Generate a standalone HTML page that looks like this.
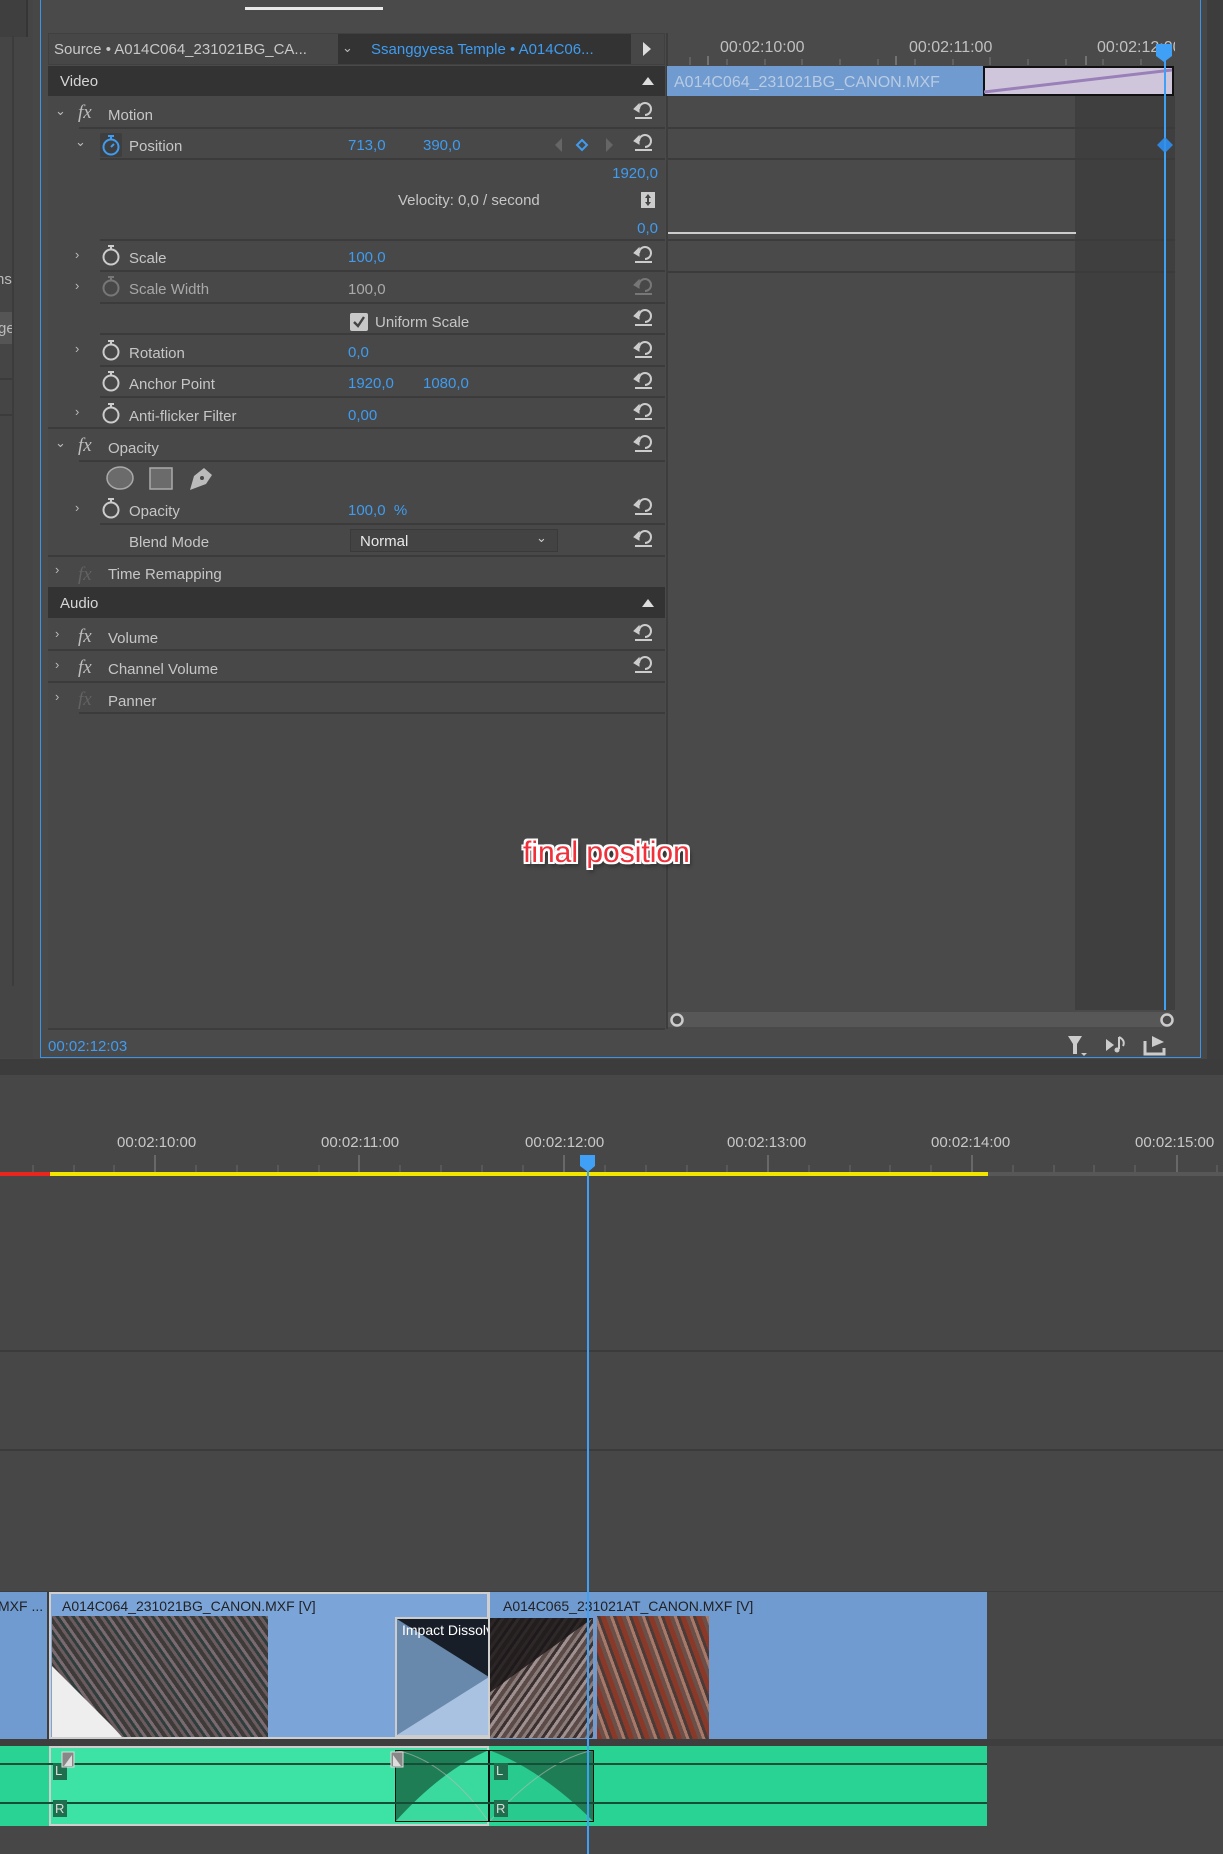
<!DOCTYPE html>
<html><head><meta charset="utf-8">
<style>
*{margin:0;padding:0;box-sizing:border-box}
body{width:1223px;height:1854px;background:#474747;position:relative;overflow:hidden;font-family:"Liberation Sans",sans-serif;font-size:15px;color:#c6c6c6}
.a{position:absolute}
.t{position:absolute;white-space:nowrap;line-height:18px}
.b{color:#3f9cf0}
.hl{position:absolute;height:2px;background:#3b3b3b}
.ico{position:absolute}
.fx{position:absolute;font-family:"Liberation Serif",serif;font-style:italic;font-size:19px;color:#bdbdbd;line-height:18px}
.chev{position:absolute;font-size:13px;color:#bbb;line-height:14px}
</style></head><body>

<!-- left strip -->
<div class="a" style="left:0;top:0;width:33px;height:1058px;background:#454545"></div>
<div class="a" style="left:0;top:0;width:27px;height:37px;background:#3f3f3f"></div>
<div class="a" style="left:26px;top:0;width:2px;height:37px;background:#353535"></div>
<div class="a" style="left:0;top:312px;width:14px;height:32px;background:#555"></div>
<div class="t" style="left:-4px;top:271px;color:#bbb">ns</div>
<div class="t" style="left:-2px;top:320px;color:#bbb">ge</div>
<div class="a" style="left:0;top:378px;width:14px;height:2px;background:#3b3b3b"></div>
<div class="a" style="left:0;top:414px;width:14px;height:2px;background:#3b3b3b"></div>
<div class="a" style="left:12px;top:36px;width:2px;height:950px;background:#3c3c3c"></div>

<!-- effect controls panel -->
<div class="a" style="left:40px;top:-2px;width:1161px;height:1060px;border:1px solid #3a94e8;background:#4a4a4a"></div>
<div class="a" style="left:245px;top:7px;width:138px;height:3px;background:#e8e8e8"></div>

<!-- header tabs -->
<div class="a" style="left:48px;top:33px;width:617px;height:32px;background:#474747;border:1px solid #404040"></div>
<div class="t" style="left:54px;top:41px;color:#c8c8c8">Source • A014C064_231021BG_CA...</div>
<div class="a" style="left:338px;top:34px;width:293px;height:30px;background:#333"></div>
<div class="t" style="left:342px;top:39px;color:#bbb;font-size:13px">&#8964;</div>
<div class="t b" style="left:371px;top:41px">Ssanggyesa Temple • A014C06...</div>
<svg class="ico" style="left:643px;top:42px" width="8" height="14"><path d="M0 0L8 7L0 14Z" fill="#ddd"/></svg>

<!-- left pane body -->
<div class="a" style="left:48px;top:66px;width:617px;height:963px;background:#484848"></div>
<div class="a" style="left:48px;top:66px;width:617px;height:30px;background:#333"></div>
<div class="t" style="left:60px;top:73px;color:#d6d6d6">Video</div>
<svg class="ico" style="left:642px;top:77px" width="12" height="8"><path d="M0 8L6 0L12 8Z" fill="#ddd"/></svg>
<div class="a" style="left:48px;top:587px;width:617px;height:31px;background:#333"></div>
<div class="t" style="left:60px;top:595px;color:#d6d6d6">Audio</div>
<svg class="ico" style="left:642px;top:599px" width="12" height="8"><path d="M0 8L6 0L12 8Z" fill="#ddd"/></svg>

<!-- row separators -->
<div class="hl" style="left:79px;top:127px;width:586px"></div>
<div class="hl" style="left:100px;top:158px;width:565px"></div>
<div class="hl" style="left:100px;top:239px;width:565px"></div>
<div class="hl" style="left:100px;top:270px;width:565px"></div>
<div class="hl" style="left:100px;top:302px;width:565px"></div>
<div class="hl" style="left:100px;top:333px;width:565px"></div>
<div class="hl" style="left:100px;top:365px;width:565px"></div>
<div class="hl" style="left:100px;top:396px;width:565px"></div>
<div class="hl" style="left:48px;top:427px;width:617px"></div>
<div class="hl" style="left:79px;top:460px;width:586px"></div>
<div class="hl" style="left:100px;top:523px;width:565px"></div>
<div class="hl" style="left:48px;top:555px;width:617px"></div>
<div class="hl" style="left:48px;top:649px;width:617px"></div>
<div class="hl" style="left:48px;top:681px;width:617px"></div>
<div class="hl" style="left:79px;top:712px;width:586px"></div>

<!-- effect rows -->
<div class="chev" style="left:55px;top:104px">&#8964;</div><div class="fx" style="left:78px;top:104px">fx</div><div class="t" style="left:108px;top:107px">Motion</div>
<div class="chev" style="left:75px;top:135px">&#8964;</div>
<div class="t" style="left:129px;top:138px">Position</div><div class="t b" style="left:348px;top:137px">713,0</div><div class="t b" style="left:423px;top:137px">390,0</div>
<svg class="ico" style="left:554px;top:137px" width="60" height="16"><path d="M8 1L1 8L8 15Z" fill="#666"/><path d="M28 3L33 8L28 13L23 8Z" fill="none" stroke="#3f9cf0" stroke-width="2"/><path d="M52 1L59 8L52 15Z" fill="#666"/></svg>
<div class="t b" style="right:565px;top:165px">1920,0</div>
<div class="t" style="left:398px;top:192px">Velocity: 0,0 / second</div>
<div class="a" style="left:641px;top:192px;width:14px;height:16px;background:#ccc"></div>
<svg class="ico" style="left:641px;top:192px" width="14" height="16"><path d="M7 2L10 6H4ZM7 14L10 10H4Z M6 6H8V10H6Z" fill="#444"/></svg>
<div class="t b" style="right:565px;top:220px">0,0</div>
<div class="chev" style="left:75px;top:248px">&#8250;</div><div class="t" style="left:129px;top:250px">Scale</div><div class="t b" style="left:348px;top:249px">100,0</div>
<div class="chev" style="left:75px;top:279px">&#8250;</div><div class="t" style="left:129px;top:281px;color:#a8a8a8">Scale Width</div><div class="t" style="left:348px;top:281px;color:#aaa">100,0</div>
<div class="a" style="left:350px;top:313px;width:18px;height:18px;background:#c8c8c8;border-radius:2px"></div>
<svg class="ico" style="left:352px;top:315px" width="14" height="14"><path d="M2 7L6 11L12 2" fill="none" stroke="#444" stroke-width="2.4"/></svg>
<div class="t" style="left:375px;top:314px">Uniform Scale</div>
<div class="chev" style="left:75px;top:342px">&#8250;</div><div class="t" style="left:129px;top:345px">Rotation</div><div class="t b" style="left:348px;top:344px">0,0</div>
<div class="t" style="left:129px;top:376px">Anchor Point</div><div class="t b" style="left:348px;top:375px">1920,0</div><div class="t b" style="left:423px;top:375px">1080,0</div>
<div class="chev" style="left:75px;top:405px">&#8250;</div><div class="t" style="left:129px;top:408px">Anti-flicker Filter</div><div class="t b" style="left:348px;top:407px">0,00</div>
<div class="chev" style="left:55px;top:436px">&#8964;</div><div class="fx" style="left:78px;top:437px">fx</div><div class="t" style="left:108px;top:440px">Opacity</div>
<svg class="ico" style="left:106px;top:466px" width="110" height="26"><ellipse cx="14" cy="12" rx="13" ry="11" fill="#6b6b6b" stroke="#aaa" stroke-width="1.5"/><rect x="44" y="2" width="22" height="21" fill="#6b6b6b" stroke="#aaa" stroke-width="1.5"/><path d="M84 24L88 10L98 2L106 9L100 18Z" fill="#bbb"/><circle cx="96" cy="12" r="2" fill="#484848"/></svg>
<div class="chev" style="left:75px;top:501px">&#8250;</div><div class="t" style="left:129px;top:503px">Opacity</div><div class="t b" style="left:348px;top:502px">100,0&nbsp; %</div>
<div class="t" style="left:129px;top:534px">Blend Mode</div>
<div class="a" style="left:350px;top:529px;width:208px;height:23px;background:#434343;border:1px solid #3a3a3a"></div>
<div class="t" style="left:360px;top:533px;color:#e8e8e8">Normal</div>
<div class="t" style="left:536px;top:529px;font-size:13px;color:#ccc">&#8964;</div>
<div class="chev" style="left:55px;top:563px">&#8250;</div><div class="fx" style="left:78px;top:566px;color:#626262">fx</div><div class="t" style="left:108px;top:566px">Time Remapping</div>
<div class="chev" style="left:55px;top:627px">&#8250;</div><div class="fx" style="left:78px;top:628px">fx</div><div class="t" style="left:108px;top:630px">Volume</div>
<div class="chev" style="left:55px;top:658px">&#8250;</div><div class="fx" style="left:78px;top:659px">fx</div><div class="t" style="left:108px;top:661px">Channel Volume</div>
<div class="chev" style="left:55px;top:690px">&#8250;</div><div class="fx" style="left:78px;top:691px;color:#626262">fx</div><div class="t" style="left:108px;top:693px">Panner</div>

<!-- stopwatches -->
<svg class="ico" style="left:100px;top:133px" width="22" height="24"><rect x="0" y="0" width="22" height="24" fill="#3e3e3e" rx="2"/><circle cx="11" cy="14" r="7.5" fill="none" stroke="#3f9cf0" stroke-width="2"/><path d="M8 3H14M11 3V6M11 14L14 11" stroke="#3f9cf0" stroke-width="2"/></svg>
<svg class="ico" style="left:101px;top:243px" width="20" height="24"><circle cx="10" cy="14" r="7.5" fill="none" stroke="#ccc" stroke-width="2"/><path d="M7 3H13M10 3V6" stroke="#ccc" stroke-width="2"/></svg>
<svg class="ico" style="left:101px;top:274px" width="20" height="24"><circle cx="10" cy="14" r="7.5" fill="none" stroke="#777" stroke-width="2"/><path d="M7 3H13M10 3V6" stroke="#777" stroke-width="2"/></svg>
<svg class="ico" style="left:101px;top:338px" width="20" height="24"><circle cx="10" cy="14" r="7.5" fill="none" stroke="#ccc" stroke-width="2"/><path d="M7 3H13M10 3V6" stroke="#ccc" stroke-width="2"/></svg>
<svg class="ico" style="left:101px;top:369px" width="20" height="24"><circle cx="10" cy="14" r="7.5" fill="none" stroke="#ccc" stroke-width="2"/><path d="M7 3H13M10 3V6" stroke="#ccc" stroke-width="2"/></svg>
<svg class="ico" style="left:101px;top:401px" width="20" height="24"><circle cx="10" cy="14" r="7.5" fill="none" stroke="#ccc" stroke-width="2"/><path d="M7 3H13M10 3V6" stroke="#ccc" stroke-width="2"/></svg>
<svg class="ico" style="left:101px;top:496px" width="20" height="24"><circle cx="10" cy="14" r="7.5" fill="none" stroke="#ccc" stroke-width="2"/><path d="M7 3H13M10 3V6" stroke="#ccc" stroke-width="2"/></svg>

<!-- reset icons -->
<svg width="0" height="0" style="position:absolute"><defs><g id="rs"><path d="M6 9A6 6 0 1 1 12 15" fill="none" stroke-width="2"/><path d="M1 9L6 4L6 12Z"/><path d="M2 18H19" stroke-width="2"/></g></defs></svg>
<svg class="ico" style="left:633px;top:100px" width="22" height="20" fill="#ccc" stroke="#ccc"><use href="#rs"/></svg>
<svg class="ico" style="left:633px;top:132px" width="22" height="20" fill="#ccc" stroke="#ccc"><use href="#rs"/></svg>
<svg class="ico" style="left:633px;top:244px" width="22" height="20" fill="#ccc" stroke="#ccc"><use href="#rs"/></svg>
<svg class="ico" style="left:633px;top:276px" width="22" height="20" fill="#777" stroke="#777"><use href="#rs"/></svg>
<svg class="ico" style="left:633px;top:307px" width="22" height="20" fill="#ccc" stroke="#ccc"><use href="#rs"/></svg>
<svg class="ico" style="left:633px;top:339px" width="22" height="20" fill="#ccc" stroke="#ccc"><use href="#rs"/></svg>
<svg class="ico" style="left:633px;top:370px" width="22" height="20" fill="#ccc" stroke="#ccc"><use href="#rs"/></svg>
<svg class="ico" style="left:633px;top:401px" width="22" height="20" fill="#ccc" stroke="#ccc"><use href="#rs"/></svg>
<svg class="ico" style="left:633px;top:433px" width="22" height="20" fill="#ccc" stroke="#ccc"><use href="#rs"/></svg>
<svg class="ico" style="left:633px;top:496px" width="22" height="20" fill="#ccc" stroke="#ccc"><use href="#rs"/></svg>
<svg class="ico" style="left:633px;top:528px" width="22" height="20" fill="#ccc" stroke="#ccc"><use href="#rs"/></svg>
<svg class="ico" style="left:633px;top:622px" width="22" height="20" fill="#ccc" stroke="#ccc"><use href="#rs"/></svg>
<svg class="ico" style="left:633px;top:654px" width="22" height="20" fill="#ccc" stroke="#ccc"><use href="#rs"/></svg>

<!-- right timeline in ECP -->
<div class="a" style="left:666px;top:33px;width:2px;height:996px;background:#3d3d3d"></div>
<div class="a" style="left:1075px;top:96px;width:100px;height:914px;background:#3f3f3f"></div>
<div class="t" style="left:720px;top:39px;font-size:16px;color:#c0c0c0">00:02:10:00</div>
<div class="t" style="left:909px;top:39px;font-size:16px;color:#c0c0c0">00:02:11:00</div>
<div class="a" style="left:1097px;top:30px;width:78px;height:30px;overflow:hidden"><div class="t" style="left:0;top:9px;font-size:16px;color:#c0c0c0">00:02:12:00</div></div>
<svg class="ico" style="left:668px;top:56px" width="510" height="10"><g stroke="#777" stroke-width="1"><path d="M22 1V9M59 3V9M97 3V9M134 3V9M172 3V9M210 3V9M247 3V9M285 3V9M322 1V9M360 3V9M398 3V9M435 3V9M473 3V9"/><path d="M40 0V9M228 0V9M418 0V9" stroke="#999"/></g></svg>
<div class="a" style="left:667px;top:66px;width:317px;height:30px;background:#6f9bd0"></div>
<div class="t" style="left:674px;top:74px;color:#b9cbe3;font-size:16px">A014C064_231021BG_CANON.MXF</div>
<div class="a" style="left:983px;top:66px;width:191px;height:30px;background:#d0c6dc;border:2px solid #111"></div>
<svg class="ico" style="left:984px;top:67px" width="190" height="28"><path d="M0 25L188 3" stroke="#9a80b8" stroke-width="3"/></svg>
<div class="hl" style="left:668px;top:127px;width:507px"></div>
<div class="hl" style="left:668px;top:158px;width:507px"></div>
<div class="hl" style="left:668px;top:239px;width:507px"></div>
<div class="hl" style="left:668px;top:271px;width:507px"></div>
<div class="a" style="left:668px;top:232px;width:408px;height:2px;background:#ccc"></div>
<div class="a" style="left:1164px;top:50px;width:2px;height:960px;background:#3fa0f5"></div>
<svg class="ico" style="left:1156px;top:44px" width="20" height="20"><path d="M0 0H16V12L8 18L0 12Z" fill="#3fa0f5"/></svg>
<svg class="ico" style="left:1156px;top:136px" width="18" height="18"><path d="M9 1L17 9L9 17L1 9Z" fill="#2e86e0"/><path d="M9 1V17" stroke="#3f9cf0"/></svg>
<div class="a" style="left:668px;top:1012px;width:502px;height:15px;background:#575757"></div>
<svg class="ico" style="left:668px;top:1011px" width="510" height="18"><circle cx="9" cy="9" r="5.5" fill="#4a4a4a" stroke="#ccc" stroke-width="2.5"/><circle cx="499" cy="9" r="5.5" fill="#4a4a4a" stroke="#ccc" stroke-width="2.5"/></svg>
<div class="a" style="left:48px;top:1028px;width:617px;height:2px;background:#3d3d3d"></div>
<div class="t b" style="left:48px;top:1038px;font-size:15px">00:02:12:03</div>
<svg class="ico" style="left:1068px;top:1034px" width="110" height="24"><path d="M0 2H14L9 10V20H5V10Z" fill="#ccc"/><path d="M13 19H19L16 22Z" fill="#ccc"/><path d="M38 5V17L46 11Z" fill="#ccc"/><path d="M51 3V15M51 3C55 5 57 8 55 12" stroke="#ccc" stroke-width="2" fill="none"/><circle cx="49" cy="16" r="2.5" fill="#ccc"/><path d="M77 7V20H96V14" stroke="#ccc" stroke-width="3" fill="none"/><path d="M84 2L96 8L84 13Z" fill="#ccc"/></svg>

<div class="a" style="left:1207px;top:0;width:16px;height:1060px;background:#3d3d3d"></div>
<div class="a" style="left:0;top:1059px;width:1223px;height:16px;background:#3c3c3c"></div>

<!-- final position label -->
<div class="t" style="left:523px;top:836px;font-size:30px;line-height:34px;color:#f0303a;text-shadow:-2px -2px 0 #fff,2px -2px 0 #fff,-2px 2px 0 #fff,2px 2px 0 #fff,0 2px 0 #fff,0 -2px 0 #fff,2px 0 0 #fff,-2px 0 0 #fff,2px 4px 4px rgba(0,0,0,.6)">final position</div>

<!-- timeline panel -->
<div class="t" style="left:117px;top:1134px;color:#c8c8c8;font-size:15px">00:02:10:00</div>
<div class="t" style="left:321px;top:1134px;color:#c8c8c8;font-size:15px">00:02:11:00</div>
<div class="t" style="left:525px;top:1134px;color:#c8c8c8;font-size:15px">00:02:12:00</div>
<div class="t" style="left:727px;top:1134px;color:#c8c8c8;font-size:15px">00:02:13:00</div>
<div class="t" style="left:931px;top:1134px;color:#c8c8c8;font-size:15px">00:02:14:00</div>
<div class="t" style="left:1135px;top:1134px;color:#c8c8c8;font-size:15px">00:02:15:00</div>
<svg class="ico" style="left:0;top:1155px" width="1223" height="18"><g stroke="#6a6a6a"><path d="M33 10V17M74 10V17M114 10V17M196 10V17M237 10V17M278 10V17M319 10V17M400 10V17M441 10V17M482 10V17M523 10V17M605 10V17M646 10V17M687 10V17M727 10V17M809 10V17M850 10V17M890 10V17M931 10V17M1013 10V17M1054 10V17M1094 10V17M1135 10V17M1217 10V17"/><path d="M155 0V17M359 0V17M564 0V17M768 0V17M972 0V17M1177 0V17" stroke="#888"/></g></svg>
<div class="a" style="left:0;top:1172px;width:50px;height:4px;background:#e8261e"></div>
<div class="a" style="left:50px;top:1172px;width:938px;height:4px;background:#f2e600"></div>
<div class="a" style="left:988px;top:1172px;width:235px;height:4px;background:#575757"></div>
<div class="hl" style="left:0;top:1350px;width:1223px"></div>
<div class="hl" style="left:0;top:1449px;width:1223px"></div>

<!-- video track -->
<div class="a" style="left:0;top:1591px;width:1223px;height:155px;background:#3e3e3e"></div>
<div class="a" style="left:0;top:1592px;width:47px;height:147px;background:#6f9bd0"></div>
<div class="t" style="left:-2px;top:1597px;color:#222;font-size:14px">MXF ...</div>
<div class="a" style="left:49px;top:1592px;width:440px;height:147px;background:#7ba5d9;border:2px solid #cfcfcf"></div>
<div class="t" style="left:62px;top:1597px;color:#222;font-size:14px">A014C064_231021BG_CANON.MXF [V]</div>
<div class="a" style="left:489px;top:1592px;width:498px;height:147px;background:#6f9bd0"></div>
<div class="t" style="left:503px;top:1597px;color:#222;font-size:14px">A014C065_231021AT_CANON.MXF [V]</div>
<div class="a" style="left:52px;top:1616px;width:216px;height:121px;background:repeating-linear-gradient(55deg,#3d3a3a 0 4px,#6b5a5e 4px 7px,#2f3e3c 7px 10px,#7a6a70 10px 13px)"></div>
<svg class="ico" style="left:52px;top:1616px" width="216" height="121"><path d="M0 50L20 70L40 90L60 110L70 121H0Z" fill="#eee"/></svg>
<div class="a" style="left:395px;top:1617px;width:94px;height:120px;background:#ccc"></div>
<svg class="ico" style="left:397px;top:1619px" width="92" height="116"><rect width="92" height="116" fill="#6888ac"/><path d="M0 0H92V58Z" fill="#171e28"/><path d="M0 116H92V58Z" fill="#a9c2e2"/></svg>
<div class="t" style="left:402px;top:1621px;color:#fff;font-size:14px">Impact Dissolve</div>
<div class="a" style="left:489px;top:1618px;width:104px;height:120px;background:repeating-linear-gradient(125deg,#5a4a48 0 4px,#8a7a78 4px 7px,#3a3030 7px 10px,#a09090 10px 13px)"></div>
<svg class="ico" style="left:489px;top:1618px" width="104" height="120"><path d="M0 0H104L0 75Z" fill="#1a1618" opacity="0.85"/></svg>
<div class="a" style="left:597px;top:1616px;width:112px;height:123px;background:repeating-linear-gradient(70deg,#8a3828 0 5px,#6a5048 5px 9px,#a87868 9px 12px,#4a3a38 12px 15px)"></div>
<div class="a" style="left:488px;top:1592px;width:2px;height:147px;background:#cfcfcf"></div>

<!-- audio track -->
<div class="a" style="left:0;top:1746px;width:987px;height:80px;background:#29d394"></div>
<div class="a" style="left:49px;top:1746px;width:440px;height:80px;background:#3de3a5;border:2px solid #cfcfcf"></div>
<div class="a" style="left:395px;top:1750px;width:94px;height:72px;background:#1f7d56"></div>
<div class="a" style="left:489px;top:1750px;width:105px;height:72px;background:#1f7d56"></div>
<svg class="ico" style="left:395px;top:1750px" width="199" height="72"><path d="M0 72L94 0L0 0Z" fill="#1f7d56"/><path d="M0 72Q47 20 94 0V72Z" fill="#3de3a5" opacity="0.9"/><path d="M94 0Q147 20 199 72H94Z" fill="#29d394" opacity="0.9"/><path d="M0 0Q50 10 94 72M94 72Q150 10 199 0" stroke="#bbb" fill="none" stroke-width="1" opacity="0.6"/><rect x="0" y="0" width="94" height="72" fill="none" stroke="#111" stroke-width="2"/><rect x="94" y="0" width="105" height="72" fill="none" stroke="#111" stroke-width="2"/></svg>
<div class="a" style="left:0;top:1763px;width:987px;height:2px;background:#164d36"></div>
<div class="a" style="left:0;top:1802px;width:987px;height:2px;background:#164d36"></div>
<div class="a" style="left:53px;top:1763px;width:14px;height:17px;background:#1f6e4d"></div><div class="t" style="left:55px;top:1762px;color:#ddd;font-size:13px">L</div>
<div class="a" style="left:53px;top:1800px;width:14px;height:17px;background:#1f6e4d"></div><div class="t" style="left:55px;top:1800px;color:#ddd;font-size:13px">R</div>
<div class="a" style="left:494px;top:1763px;width:14px;height:17px;background:#1f6e4d"></div><div class="t" style="left:496px;top:1762px;color:#ddd;font-size:13px">L</div>
<div class="a" style="left:494px;top:1800px;width:14px;height:17px;background:#1f6e4d"></div><div class="t" style="left:496px;top:1800px;color:#ddd;font-size:13px">R</div>
<svg class="ico" style="left:61px;top:1751px" width="16" height="18"><rect x="1" y="1" width="12" height="15" fill="#888" stroke="#ddd"/><path d="M3 15L11 4V15Z" fill="#ddd"/></svg>
<svg class="ico" style="left:390px;top:1751px" width="16" height="18"><rect x="1" y="1" width="12" height="15" fill="#888" stroke="#ddd"/><path d="M3 4L11 15H3Z" fill="#ddd"/></svg>
<div class="a" style="left:987px;top:1592px;width:236px;height:234px;background:#474747"></div>
<div class="a" style="left:987px;top:1739px;width:236px;height:7px;background:#3e3e3e"></div>

<!-- playhead -->
<div class="a" style="left:587px;top:1165px;width:2px;height:689px;background:#3fa0f5"></div>
<svg class="ico" style="left:580px;top:1155px" width="20" height="18"><path d="M0 0H15V11L8 17L0 11Z" fill="#3fa0f5"/></svg>
</body></html>
